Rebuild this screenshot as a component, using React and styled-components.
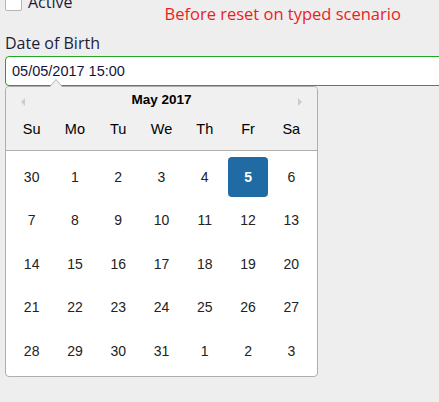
import React from 'react';
import styled, { createGlobalStyle } from 'styled-components';

const Global = createGlobalStyle`
  html, body {
    margin: 0;
    background: #eeeeee;
    overflow: hidden;
  }
  body {
    font-family: "Open Sans", "Liberation Sans", sans-serif;
  }
`;

const Page = styled.div`
  padding: 0 5px;
  width: 439px;
  height: 402px;
  box-sizing: border-box;
`;

const TopRow = styled.div`
  display: flex;
  align-items: flex-start;
  margin-top: -9px;
  height: 41px;
`;

const CheckLabel = styled.label`
  display: flex;
  align-items: center;
  gap: 6px;
  font-size: 16px;
  line-height: 22px;
  color: #1c1c3a;
`;

const Box = styled.span`
  width: 15px;
  height: 15px;
  background: #fff;
  border: 1px solid #b5b5b5;
  border-radius: 2px;
`;

const Note = styled.div`
  margin-left: 92px;
  margin-top: 12px;
  font-size: 16.5px;
  line-height: 22px;
  color: #ec1c24;
`;

const Label = styled.div`
  font-size: 16px;
  line-height: 22px;
  color: #1c1c3a;
  margin-bottom: 2px;
`;

const Field = styled.div`
  width: 445px;
  height: 30px;
  box-sizing: border-box;
  border: 1px solid #22a522;
  border-radius: 4px;
  background: #fff;
  display: flex;
  align-items: center;
  padding-left: 6px;
  font-family: "Liberation Sans", Arial, sans-serif;
  font-size: 14.5px;
  color: #14143a;
`;

const Popup = styled.div`
  position: relative;
  width: 313px;
  box-sizing: border-box;
  border: 1px solid #aeaeae;
  border-radius: 4px;
  background: #fff;
  font-family: "Liberation Sans", Arial, sans-serif;
`;

const Pointer = styled.div`
  position: absolute;
  top: -8px;
  left: 43px;
  width: 0;
  height: 0;
  border-left: 7px solid transparent;
  border-right: 7px solid transparent;
  border-bottom: 8px solid #aeaeae;

  &::after {
    content: "";
    position: absolute;
    left: -6px;
    top: 1px;
    border-left: 6px solid transparent;
    border-right: 6px solid transparent;
    border-bottom: 7px solid #f0f0f0;
  }
`;

const Header = styled.div`
  background: #f0f0f0;
  border-bottom: 1px solid #aeaeae;
  border-radius: 4px 4px 0 0;
  padding: 4px 4px 2px;
`;

const Title = styled.div`
  text-align: center;
  font-weight: bold;
  font-size: 13.5px;
  line-height: 18px;
  color: #000;
`;

const Nav = styled.span`
  position: absolute;
  top: 11px;
  ${p => (p.$side === 'left' ? 'left: 15px;' : 'right: 15px;')}
  width: 0;
  height: 0;
  border-top: 4px solid transparent;
  border-bottom: 4px solid transparent;
  ${p => (p.$side === 'left' ? 'border-right: 4px solid #ccc;' : 'border-left: 4px solid #ccc;')}
`;

const Week = styled.div`
  display: flex;
`;

const Cell = styled.div`
  width: 40px;
  height: ${p => (p.$head ? '36px' : '40px')};
  margin: 1.7px;
  display: flex;
  align-items: center;
  justify-content: center;
  font-size: ${p => (p.$head ? '14.5px' : '14px')};
  color: ${p => (p.$selected ? '#fff' : p.$head ? '#000' : '#222')};
  font-weight: ${p => (p.$selected ? 'bold' : 'normal')};
  background: ${p => (p.$selected ? '#216ba5' : 'transparent')};
  border-radius: 4px;
`;

const Month = styled.div`
  padding: 4px;
`;

const dayNames = ['Su', 'Mo', 'Tu', 'We', 'Th', 'Fr', 'Sa'];
const weeks = [
  [30, 1, 2, 3, 4, 5, 6],
  [7, 8, 9, 10, 11, 12, 13],
  [14, 15, 16, 17, 18, 19, 20],
  [21, 22, 23, 24, 25, 26, 27],
  [28, 29, 30, 31, 1, 2, 3],
];

export default function App() {
  return (
    <Page>
      <Global />
      <TopRow>
        <CheckLabel>
          <Box />
          Active
        </CheckLabel>
        <Note>Before reset on typed scenario</Note>
      </TopRow>
      <Label>Date of Birth</Label>
      <Field>05/05/2017 15:00</Field>
      <Popup>
        <Pointer />
        <Header>
          <Nav $side="left" />
          <Nav $side="right" />
          <Title>May 2017</Title>
          <Week>
            {dayNames.map(d => (
              <Cell key={d} $head>{d}</Cell>
            ))}
          </Week>
        </Header>
        <Month>
          {weeks.map((w, i) => (
            <Week key={i}>
              {w.map((d, j) => (
                <Cell key={j} $selected={i === 0 && j === 5}>{d}</Cell>
              ))}
            </Week>
          ))}
        </Month>
      </Popup>
    </Page>
  );
}
